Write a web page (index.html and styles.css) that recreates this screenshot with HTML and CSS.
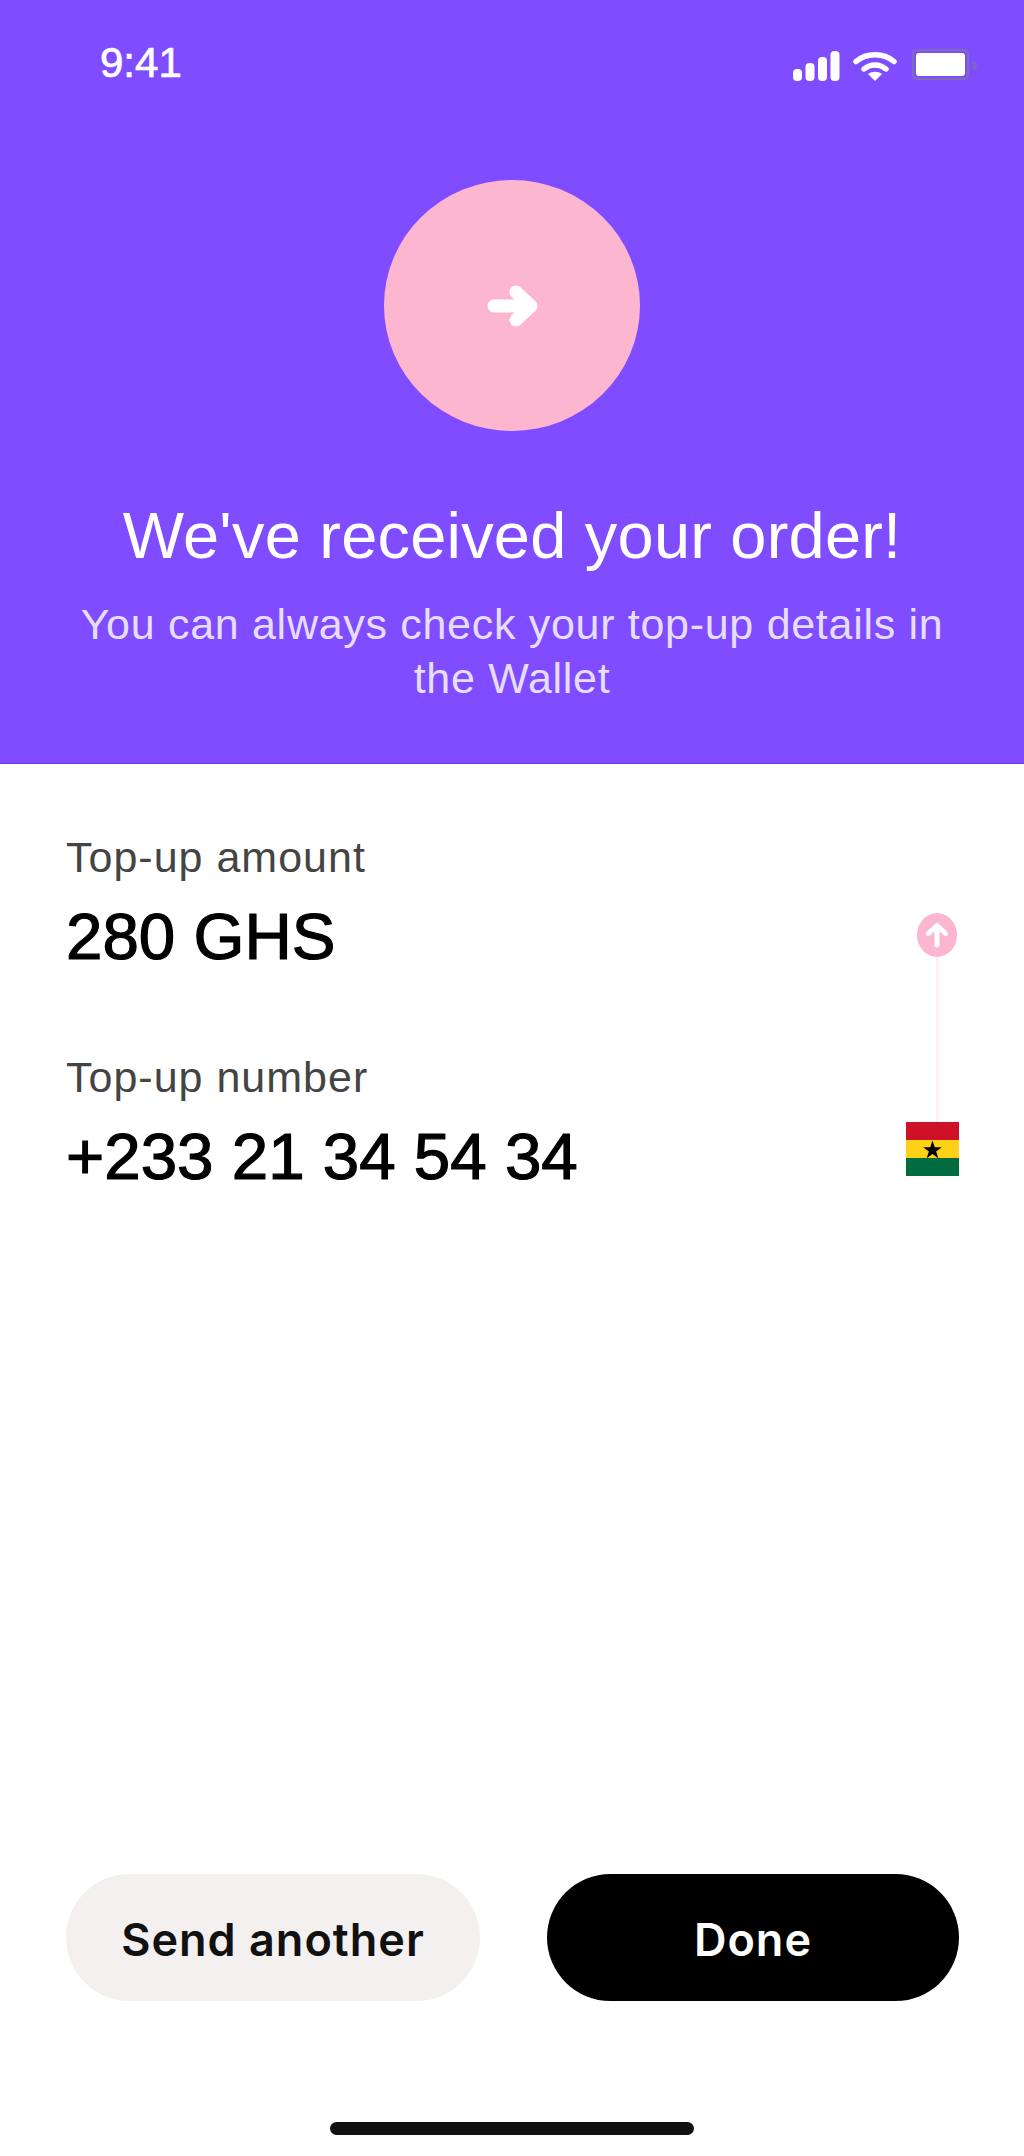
FILE: index.html
```html
<!DOCTYPE html>
<html>
<head>
  <link rel="stylesheet" href="styles.css">
</head>
<body>
  <header class="hero">
    <div class="status-bar">
      <span class="status-time">9:41</span>
      <div class="status-icons">
        <svg class="icon-signal" width="47" height="30" viewBox="0 0 47 30">
          <rect x="0" y="18" width="9" height="12" rx="4" fill="#fff"/>
          <rect x="12.500" y="12" width="9" height="18" rx="4" fill="#fff"/>
          <rect x="25" y="6" width="9" height="24" rx="4" fill="#fff"/>
          <rect x="37.500" y="0" width="9" height="30" rx="4" fill="#fff"/>
        </svg>
        <svg class="icon-wifi" width="44" height="30" viewBox="0 0 44 30">
          <path d="M3 10.500C13.500 1.500 30.500 1.500 41 10.500" fill="none" stroke="#fff" stroke-width="5.500" stroke-linecap="round"/>
          <path d="M11 18C17.500 12.500 26.500 12.500 33 18" fill="none" stroke="#fff" stroke-width="5.500" stroke-linecap="round"/>
          <path d="M22 30L15 23C19 20 25 20 29 23Z" fill="#fff"/>
        </svg>
        <div class="battery">
          <div class="battery-level"></div>
        </div>
        <div class="battery-cap"></div>
      </div>
    </div>
    <div class="hero-circle">
      <svg width="52" height="42" viewBox="0 0 52 42">
        <path d="M7 21H43M29 7L44 21L29 35" fill="none" stroke="#fff" stroke-width="13" stroke-linecap="round" stroke-linejoin="round"/>
      </svg>
    </div>
    <h1 class="hero-title">We've received your order!</h1>
    <p class="hero-text">You can always check your top-up details in<br>the Wallet</p>
  </header>

  <main class="details">
    <div class="fields">
      <div class="field">
        <div class="field-label">Top-up amount</div>
        <div class="field-value">280 GHS</div>
      </div>
      <div class="field">
        <div class="field-label">Top-up number</div>
        <div class="field-value">+233 21 34 54 34</div>
      </div>
    </div>
    <div class="rail">
      <div class="rail-dot">
        <svg width="24" height="26" viewBox="0 0 24 26">
          <path d="M12 23V4M3.500 11.500L12 3.500L20.500 11.500" fill="none" stroke="#fff" stroke-width="5" stroke-linecap="round" stroke-linejoin="round"/>
        </svg>
      </div>
      <div class="rail-line"></div>
      <svg class="flag" width="53" height="54" viewBox="0 0 54 54" preserveAspectRatio="none">
        <rect width="54" height="18" fill="#ce1126"/>
        <rect y="18" width="54" height="18" fill="#fcd116"/>
        <rect y="36" width="54" height="18" fill="#006b3f"/>
        <path d="M27 18.500L29.300 25.300H36.500L30.700 29.500L32.900 36.300L27 32.100L21.100 36.300L23.300 29.500L17.500 25.300H24.700Z" fill="#000"/>
      </svg>
    </div>
  </main>

  <div class="actions">
    <button class="btn btn-light">Send another</button>
    <button class="btn btn-dark">Done</button>
  </div>
  <div class="home-bar"></div>
</body>
</html>
```

FILE: styles.css
```css
body {
  font-family: 'Liberation Sans', Arial, sans-serif;
  background: white;
  margin: 0;
  height: 2156px;
  display: flex;
  flex-direction: column;
  overflow: hidden;
}
.hero {
  background: #7f4dff;
  border-bottom: 1px solid #6a35f0;
  height: 763px;
  display: flex;
  flex-direction: column;
  align-items: center;
  color: white;
}
.status-bar {
  align-self: stretch;
  display: flex;
  justify-content: space-between;
  padding: 43px 47px 0 100px;
  height: 180px;
  box-sizing: border-box;
}
.status-time {
  font-size: 42px;
  line-height: 40px;
  -webkit-text-stroke: 0.7px white;
}
.status-icons {
  display: flex;
  align-items: flex-start;
  margin-top: 6px;
}
.icon-signal {
  margin-right: 13px;
  margin-top: 2px;
}
.icon-wifi {
  margin-right: 15px;
  margin-top: 2px;
}
.battery {
  width: 57px;
  height: 31px;
  box-sizing: border-box;
  border: 2px solid #7d6fb0;
  border-radius: 5px;
  padding: 2px;
}
.battery-level {
  background: white;
  height: 100%;
  border-radius: 3px;
}
.battery-cap {
  width: 4px;
  height: 8px;
  margin: 13px 0 0 4px;
  background: #7a68ba;
  border-radius: 0 3px 3px 0;
}
.hero-circle {
  width: 256px;
  height: 251px;
  border-radius: 50%;
  background: #fdb6cf;
  display: flex;
  align-items: center;
  justify-content: center;
}
.hero-circle svg {
  margin-left: 1px;
}
.hero-title {
  font-size: 65px;
  line-height: 72px;
  font-weight: 400;
  margin: 69px 0 0;
  letter-spacing: 0.2px;
}
.hero-text {
  font-size: 43px;
  line-height: 54px;
  margin: 25px 0 0;
  text-align: center;
  color: rgba(255, 255, 255, 0.82);
  letter-spacing: 0.7px;
}
.details {
  flex: 1;
  display: flex;
  justify-content: space-between;
  padding: 70px 65px 0 66px;
}
.fields {
  display: flex;
  flex-direction: column;
  gap: 80px;
}
.field-label {
  font-size: 43px;
  line-height: 46px;
  color: #444;
  letter-spacing: 1px;
}
.field-value {
  font-size: 65.500px;
  line-height: 74px;
  color: black;
  margin-top: 20px;
  -webkit-text-stroke: 1.200px black;
}
.rail {
  display: flex;
  flex-direction: column;
  align-items: flex-end;
  padding-top: 79px;
}
.rail-dot {
  width: 40px;
  height: 44px;
  border-radius: 50%;
  background: #fdb6cf;
  margin-right: 2px;
  display: flex;
  align-items: center;
  justify-content: center;
}
.rail-line {
  width: 3px;
  height: 165px;
  background: #fff0f3;
  margin-right: 20px;
}
.actions {
  display: grid;
  grid-template-columns: 414px 412px;
  justify-content: space-between;
  padding: 0 65px 0 66px;
}
.btn {
  height: 127px;
  border: 0;
  border-radius: 64px;
  font-family: 'Inter', sans-serif;
  font-size: 45px;
  font-weight: 600;
  letter-spacing: 1px;
  padding: 3px 0 0;
}
.btn-light {
  background: #f5f0f0;
  color: #111;
}
.btn-dark {
  background: black;
  color: white;
}
.home-bar {
  width: 364px;
  height: 13px;
  border-radius: 7px;
  background: #111;
  margin: 121px auto 21px;
}
```
